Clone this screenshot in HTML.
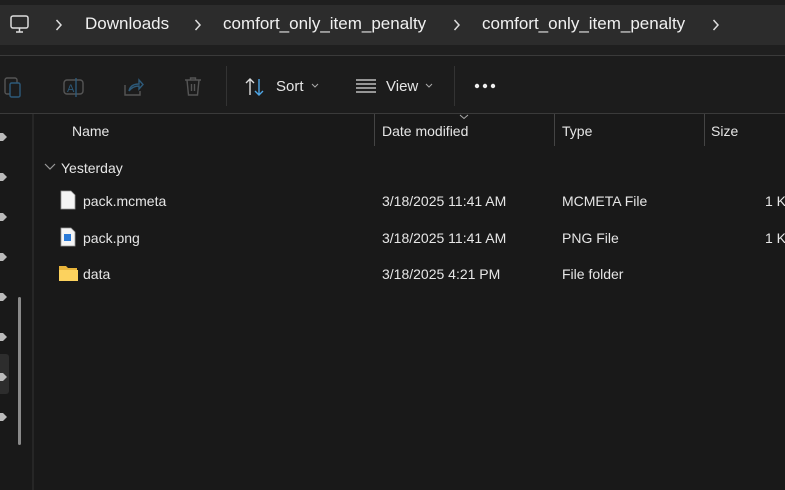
<!DOCTYPE html>
<html><head><style>
body{margin:0;width:785px;height:490px;background:#191919;font-family:"Liberation Sans",sans-serif;color:#fff;position:relative;overflow:hidden}
.a{position:absolute}
.t{font-size:14px;color:#e6e6e6;white-space:nowrap}
.bc{font-size:17px;color:#f0f0f0;white-space:nowrap}
</style></head><body>
<div class="a" style="left:0;top:0;width:785px;height:55px;background:#1f1f1f"></div>
<div class="a" style="left:0;top:5px;width:785px;height:40px;background:#2c2c2c"></div>
<div class="a" style="left:0;top:55px;width:785px;height:1px;background:#3a3a3a"></div>
<div class="a" style="left:0;top:56px;width:785px;height:57px;background:#1c1c1c"></div>
<div class="a" style="left:0;top:113px;width:785px;height:1px;background:#3a3a3a"></div>
<!-- breadcrumb -->
<svg class="a" style="left:9px;top:14px" width="22" height="20" viewBox="0 0 22 20"><rect x="2" y="2" width="17" height="12" rx="2" fill="none" stroke="#ddd" stroke-width="1.5"/><path d="M7 18h7M10.5 14v4" stroke="#ddd" stroke-width="1.5"/></svg>
<svg class="a" style="left:55px;top:19px" width="8" height="12"><path d="M1.5 1l4.5 5-4.5 5" fill="none" stroke="#ddd" stroke-width="1.5"/></svg>
<div class="a bc" style="left:85px;top:14px">Downloads</div>
<svg class="a" style="left:194px;top:19px" width="8" height="12"><path d="M1.5 1l4.5 5-4.5 5" fill="none" stroke="#ddd" stroke-width="1.5"/></svg>
<div class="a bc" style="left:223px;top:14px">comfort_only_item_penalty</div>
<svg class="a" style="left:453px;top:19px" width="8" height="12"><path d="M1.5 1l4.5 5-4.5 5" fill="none" stroke="#ddd" stroke-width="1.5"/></svg>
<div class="a bc" style="left:482px;top:14px">comfort_only_item_penalty</div>
<svg class="a" style="left:712px;top:19px" width="8" height="12"><path d="M1.5 1l4.5 5-4.5 5" fill="none" stroke="#ddd" stroke-width="1.5"/></svg>
<!-- toolbar -->
<svg class="a" style="left:3px;top:75px" width="22" height="24"><rect x="2" y="3" width="12" height="16" rx="2" fill="none" stroke="#555" stroke-width="1.4"/><rect x="7" y="8" width="10" height="14" rx="1.5" fill="#1c1c1c" stroke="#2d5a7a" stroke-width="1.4"/></svg>
<svg class="a" style="left:62px;top:75px" width="24" height="24"><rect x="2" y="5" width="19" height="14" rx="3" fill="none" stroke="#555" stroke-width="1.4"/><text x="5" y="17" font-size="11" fill="#2d5a7a" font-family="Liberation Sans">A</text><path d="M14 3v19" stroke="#2d5a7a" stroke-width="1.4"/></svg>
<svg class="a" style="left:122px;top:76px" width="24" height="22"><path d="M3 9v10h15v-4" fill="none" stroke="#555" stroke-width="1.4"/><path d="M7 15c1-5 5-7 10-7V4l4 4.5-4 4.5V10c-3 0-7 1-10 5z" fill="none" stroke="#2d5a7a" stroke-width="1.4"/></svg>
<svg class="a" style="left:183px;top:75px" width="22" height="24"><path d="M2 5h16M7.5 5V3h5v2M4 5l1.5 15h9L16 5M8.5 9v7M11.5 9v7" fill="none" stroke="#555" stroke-width="1.4"/></svg>
<div class="a" style="left:226px;top:66px;width:1px;height:40px;background:#333"></div>
<svg class="a" style="left:245px;top:76px" width="22" height="22"><path d="M5 19V3M1 7l4-4 4 4" fill="none" stroke="#ddd" stroke-width="1.4"/><path d="M14 3v16M10 15l4 4 4-4" fill="none" stroke="#4ea6e6" stroke-width="1.4"/></svg>
<div class="a t" style="left:276px;top:78px;font-size:15px">Sort</div>
<svg class="a" style="left:311px;top:83px" width="8" height="6"><path d="M1 1l3 3 3-3" fill="none" stroke="#aaa" stroke-width="1"/></svg>
<svg class="a" style="left:355px;top:78px" width="22" height="16"><path d="M1 2h20M1 6h20M1 10h20M1 14h20" stroke="#ddd" stroke-width="1.2"/></svg>
<div class="a t" style="left:386px;top:78px;font-size:15px">View</div>
<svg class="a" style="left:425px;top:83px" width="8" height="6"><path d="M1 1l3 3 3-3" fill="none" stroke="#aaa" stroke-width="1"/></svg>
<div class="a" style="left:454px;top:66px;width:1px;height:40px;background:#333"></div>
<svg class="a" style="left:474px;top:83px" width="24" height="6"><circle cx="3" cy="3" r="2.2" fill="#eee"/><circle cx="11" cy="3" r="2.2" fill="#eee"/><circle cx="19" cy="3" r="2.2" fill="#eee"/></svg>
<!-- nav pane -->
<div class="a" style="left:32px;top:114px;width:2px;height:376px;background:#262626"></div>
<div class="a" style="left:0;top:354px;width:9px;height:40px;background:#2d2d2d;border-radius:0 3px 3px 0"></div>
<div class="a" style="left:18px;top:297px;width:3px;height:148px;background:#8a8a8a;border-radius:2px"></div>
<div class="a" style="left:0;top:127px;width:8px;height:320px">
<svg width="8" height="320"><g fill="#bbb"><path d="M0 6h3l4 4-4 4H0z"/><path d="M0 46h3l4 4-4 4H0z"/><path d="M0 86h3l4 4-4 4H0z"/><path d="M0 126h3l4 4-4 4H0z"/><path d="M0 166h3l4 4-4 4H0z"/><path d="M0 206h3l4 4-4 4H0z"/><path d="M0 246h3l4 4-4 4H0z"/><path d="M0 286h3l4 4-4 4H0z"/></g></svg></div>
<!-- headers -->
<div class="a t" style="left:72px;top:123px">Name</div>
<div class="a" style="left:374px;top:114px;width:1px;height:32px;background:#444"></div>
<svg class="a" style="left:459px;top:114px" width="10" height="6"><path d="M1 1l4 3.5 4-3.5" fill="none" stroke="#aaa" stroke-width="1"/></svg>
<div class="a t" style="left:382px;top:123px">Date modified</div>
<div class="a" style="left:554px;top:114px;width:1px;height:32px;background:#444"></div>
<div class="a t" style="left:562px;top:123px">Type</div>
<div class="a" style="left:704px;top:114px;width:1px;height:32px;background:#444"></div>
<div class="a t" style="left:711px;top:123px">Size</div>
<!-- group -->
<svg class="a" style="left:44px;top:163px" width="12" height="8"><path d="M1 1l5 5 5-5" fill="none" stroke="#999" stroke-width="1.2"/></svg>
<div class="a t" style="left:61px;top:160px">Yesterday</div>
<!-- rows -->
<svg class="a" style="left:60px;top:190px" width="16" height="20"><path d="M1 1h10l4 4v14H1z" fill="#f5f5f5" stroke="#999" stroke-width=".8"/></svg>
<div class="a t" style="left:83px;top:193px">pack.mcmeta</div>
<div class="a t" style="left:382px;top:193px">3/18/2025 11:41 AM</div>
<div class="a t" style="left:562px;top:193px">MCMETA File</div>
<div class="a t" style="left:765px;top:193px">1 K</div>
<svg class="a" style="left:60px;top:227px" width="16" height="20"><path d="M1 1h10l4 4v14H1z" fill="#f5f5f5" stroke="#999" stroke-width=".8"/><rect x="4" y="7" width="7" height="7" fill="#2a7ad8"/></svg>
<div class="a t" style="left:83px;top:230px">pack.png</div>
<div class="a t" style="left:382px;top:230px">3/18/2025 11:41 AM</div>
<div class="a t" style="left:562px;top:230px">PNG File</div>
<div class="a t" style="left:765px;top:230px">1 K</div>
<svg class="a" style="left:59px;top:265px" width="19" height="16"><path d="M0 1h7l2 2h9v12H0z" fill="#e8b43a"/><rect x="0" y="5" width="19" height="11" fill="#fcd25e"/></svg>
<div class="a t" style="left:83px;top:266px">data</div>
<div class="a t" style="left:382px;top:266px">3/18/2025 4:21 PM</div>
<div class="a t" style="left:562px;top:266px">File folder</div>
</body></html>
